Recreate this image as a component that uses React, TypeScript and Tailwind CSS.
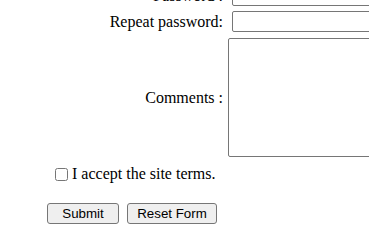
export default function App() {
  return (
    <div className="h-[236px] w-[369px] overflow-hidden bg-white font-['Liberation_Serif',serif] text-[16px] leading-[18px] text-black">
      <form className="-mt-[15px] flex w-[480px] flex-col">
        <div className="flex h-[21px] items-center">
          <label htmlFor="pw" className="w-[223px] shrink-0 text-right">
            Password :
          </label>
          <input
            id="pw"
            type="password"
            className="ml-[9px] h-[21px] w-[170px] shrink-0 rounded-[2px] border border-[#767676] bg-white"
          />
        </div>

        <div className="mt-[5px] flex h-[21px] items-center">
          <label htmlFor="pw2" className="w-[223px] shrink-0 text-right">
            Repeat password:
          </label>
          <input
            id="pw2"
            type="password"
            className="ml-[9px] h-[21px] w-[170px] shrink-0 rounded-[2px] border border-[#767676] bg-white"
          />
        </div>

        <div className="mt-[6px] flex items-center">
          <label htmlFor="comments" className="w-[223px] shrink-0 text-right">
            Comments :
          </label>
          <textarea
            id="comments"
            className="ml-[5px] h-[119px] w-[170px] shrink-0 resize-none rounded-[2px] border border-[#767676] bg-white"
          />
        </div>

        <div className="mt-[8px] flex h-[18px] items-center pl-[55px]">
          <input id="terms" type="checkbox" className="m-0 h-[13px] w-[13px]" />
          <label htmlFor="terms" className="ml-[4px]">
            I accept the site terms.
          </label>
        </div>

        <div className="mt-[20px] flex gap-[8px] pl-[47px]">
          <button
            type="submit"
            className="h-[21px] w-[72px] rounded-[3px] border border-[#767676] bg-[#efefef] font-['Liberation_Sans',sans-serif] text-[13.33px] leading-none"
          >
            Submit
          </button>
          <button
            type="reset"
            className="h-[21px] w-[90px] rounded-[3px] border border-[#767676] bg-[#efefef] font-['Liberation_Sans',sans-serif] text-[13.33px] leading-none"
          >
            Reset Form
          </button>
        </div>
      </form>
    </div>
  );
}
